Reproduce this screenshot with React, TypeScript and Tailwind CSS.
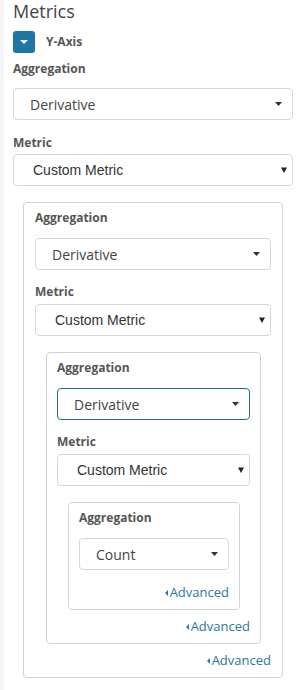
import React from "react";

const Caret = () => (
  <svg width="7" height="4" viewBox="0 0 7 4" className="shrink-0">
    <path d="M0 0h7L3.5 4z" fill="#333" />
  </svg>
);

const NativeArrow = () => (
  <svg width="6" height="6" viewBox="0 0 6 6" className="shrink-0">
    <path d="M0 0.5h6L3 6z" fill="#222" />
  </svg>
);

function AggSelect({ value, focused }: { value: string; focused?: boolean }) {
  return (
    <div
      className={`flex h-8 items-center justify-between rounded-[4px] border bg-white pl-[16px] pr-[10px] text-[14px] text-[#444] ${
        focused ? "border-[#236f7f]" : "border-[#d6d6d6]"
      }`}
    >
      <span>{value}</span>
      <Caret />
    </div>
  );
}

function MetricSelect() {
  return (
    <div className="flex h-8 items-center justify-between rounded-[4px] border border-[#d6d6d6] bg-white pl-[19px] pr-[5px] font-['Liberation_Sans',Arial,sans-serif] text-[14px] text-[#333]">
      <span>Custom Metric</span>
      <NativeArrow />
    </div>
  );
}

function Label({ children, className = "" }: { children: React.ReactNode; className?: string }) {
  return <div className={`text-[12px] font-bold leading-[17px] text-[#555] ${className}`}>{children}</div>;
}

function Advanced({ className = "" }: { className?: string }) {
  return (
    <div className={`flex items-center justify-end text-[13px] leading-[17px] text-[#2a78a0] ${className}`}>
      <svg width="3" height="6" viewBox="0 0 3 6" className="mr-[2px]">
        <path d="M3 0v6L0 3z" fill="#2a78a0" />
      </svg>
      <span>Advanced</span>
    </div>
  );
}

export default function App() {
  return (
    <div className="flex min-h-[690px] bg-white font-['Open_Sans',sans-serif]">
      <div className="w-[4px] bg-[#f4f4f4]" />
      <div className="flex-1 pl-[9px] pr-[4px]">
        <div className="text-[18px] leading-[22px] text-[#444]">Metrics</div>
        <div className="mt-[9px] flex items-center">
          <div className="flex h-[22px] w-[22px] items-center justify-center rounded-[3px] bg-[#1f76a4]">
            <svg width="8" height="4" viewBox="0 0 8 4">
              <path d="M0 0h8L4 4z" fill="#fff" />
            </svg>
          </div>
          <span className="ml-[11px] text-[12px] font-bold text-[#555]">Y-Axis</span>
        </div>
        <Label className="mt-[7px]">Aggregation</Label>
        <div className="mt-[11px]">
          <AggSelect value="Derivative" />
        </div>
        <Label className="mt-[14px]">Metric</Label>
        <div className="mt-[3px]">
          <MetricSelect />
        </div>

        <div className="mx-[10px] mt-[16px] rounded-[4px] border border-[#d3d3d3] px-[11px] pb-[8px] pt-[6px]">
          <Label>Aggregation</Label>
          <div className="mt-[12px]">
            <AggSelect value="Derivative" />
          </div>
          <Label className="mt-[13px]">Metric</Label>
          <div className="mt-[4px]">
            <MetricSelect />
          </div>

          <div className="ml-[11px] mr-[10px] mt-[16px] rounded-[4px] border border-[#d3d3d3] px-[10px] pb-[8px] pt-[6px]">
            <Label>Aggregation</Label>
            <div className="mt-[12px]">
              <AggSelect value="Derivative" focused />
            </div>
            <Label className="mt-[13px]">Metric</Label>
            <div className="mt-[4px]">
              <MetricSelect />
            </div>

            <div className="ml-[11px] mr-[10px] mt-[16px] rounded-[4px] border border-[#d3d3d3] px-[10px] pb-[8px] pt-[6px]">
              <Label>Aggregation</Label>
              <div className="mt-[12px]">
                <AggSelect value="Count" />
              </div>
              <Advanced className="mt-[14px]" />
            </div>
            <Advanced className="mt-[8px]" />
          </div>
          <Advanced className="mt-[8px]" />
        </div>
      </div>
    </div>
  );
}
